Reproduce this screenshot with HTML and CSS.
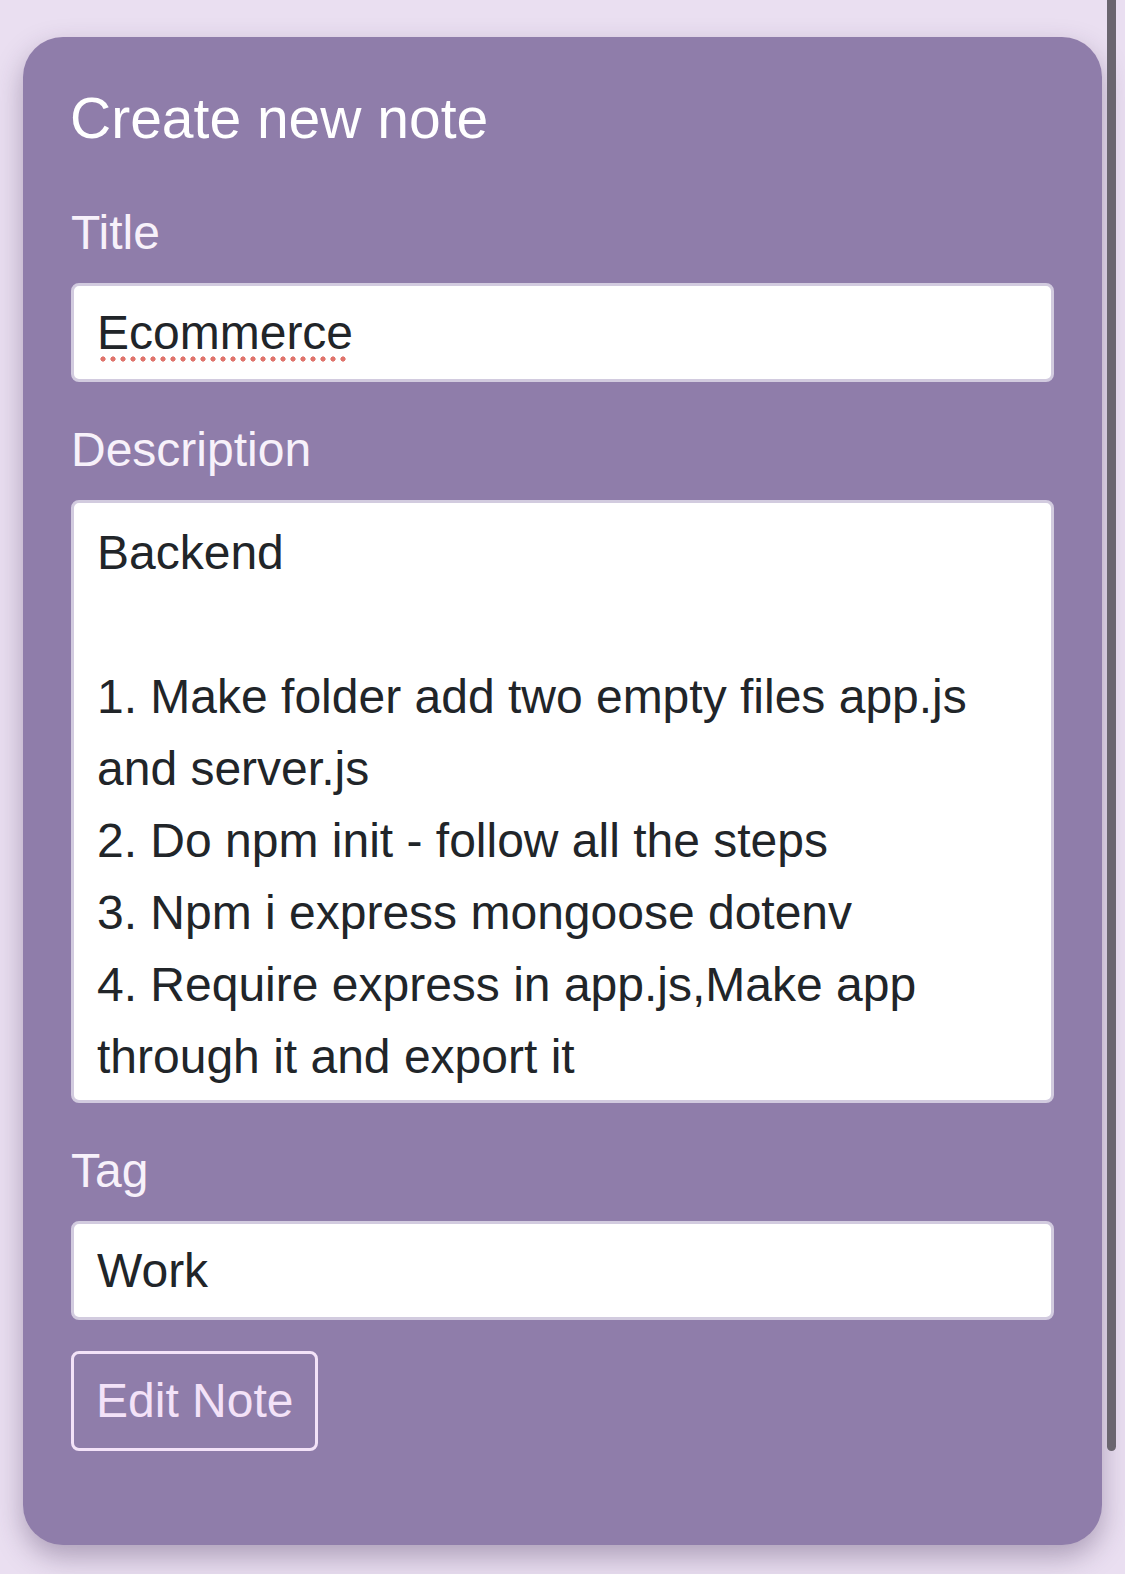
FILE: index.html
```html
<!DOCTYPE html>
<html lang="en">
<head>
<meta charset="utf-8">
<title>Create new note</title>
<link rel="stylesheet" href="styles.css">
</head>
<body>
<div class="page">
  <form class="card">
    <h2 class="card-title">Create new note</h2>
    <label class="field-label" for="title">Title</label>
    <input class="field field-title" id="title" type="text" value="Ecommerce">
    <label class="field-label" for="desc">Description</label>
    <textarea class="field field-desc" id="desc">Backend

1. Make folder add two empty files app.js and server.js
2. Do npm init - follow all the steps
3. Npm i express mongoose dotenv
4. Require express in app.js,Make app through it and export it</textarea>
    <label class="field-label" for="tag">Tag</label>
    <input class="field field-tag" id="tag" type="text" value="Work">
    <div class="actions">
      <button class="btn-edit" type="button">Edit Note</button>
    </div>
  </form>
</div>
<div class="scrollbar"></div>
</body>
</html>
```

FILE: styles.css
```css
* {
  box-sizing: border-box;
}

html, body {
  margin: 0;
  padding: 0;
}

body {
  background: #eadff1;
  font-family: "Liberation Sans", Arial, Helvetica, sans-serif;
  min-height: 1574px;
}

.page {
  padding: 37px 23px 28px 23px;
}

.card {
  display: flex;
  flex-direction: column;
  background: #8f7daa;
  border-radius: 40px;
  padding: 47px 48px 94px 48px;
  box-shadow: 0 12px 28px rgba(60, 40, 80, 0.35);
}

.card-title {
  margin: 0 0 45px -1px;
  font-size: 57px;
  font-weight: 400;
  line-height: 1.2;
  color: #ffffff;
}

.field-label {
  display: block;
  font-size: 48px;
  line-height: 1.5;
  color: #f7f1fa;
  margin: 0 0 14px 0;
}

.field {
  display: block;
  width: 100%;
  font-family: "Liberation Sans", Arial, Helvetica, sans-serif;
  font-size: 48px;
  line-height: 1.5;
  color: #212529;
  background: #ffffff;
  border: 3px solid #d2cbdf;
  border-radius: 8px;
  outline: none;
  margin: 0 0 32px 0;
}

.field-title,
.field-tag {
  height: 99px;
  padding: 0 23px;
}

/* spell-check style dotted underline under the misspelled word */
.field-title {
  background:
    linear-gradient(#ffffff, #ffffff) left 0 top 0 / 24px 100% no-repeat,
    linear-gradient(#ffffff, #ffffff) right 0 top 0 / calc(100% - 276px) 100% no-repeat,
    radial-gradient(circle at 5px 3px, #e0736b 2.3px, transparent 2.9px) 24px 70px / 10px 6px repeat-x,
    #ffffff;
}

.field-desc {
  height: 603px;
  padding: 14px 23px 7px 23px;
  resize: none;
  overflow: hidden;
  white-space: pre-wrap;
}

.field-tag {
  margin-bottom: 31px;
}

.actions {
  display: flex;
}

.btn-edit {
  font-family: "Liberation Sans", Arial, Helvetica, sans-serif;
  font-size: 48px;
  line-height: 1.5;
  color: #f3e2f8;
  background: transparent;
  border: 3px solid #f3e2f8;
  border-radius: 8px;
  height: 100px;
  padding: 0 22px;
}

.scrollbar {
  position: fixed;
  top: -8px;
  left: 1107px;
  width: 9px;
  height: 1459px;
  background: #6a656f;
  border-radius: 5px;
}
```
